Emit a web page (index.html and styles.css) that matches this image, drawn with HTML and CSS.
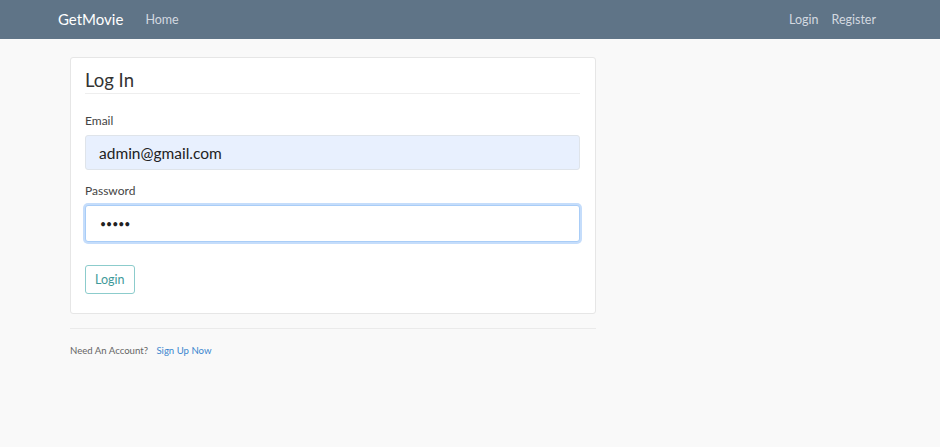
FILE: index.html
```html
<!DOCTYPE html>
<html lang="en">
<head>
<meta charset="utf-8">
<title>GetMovie - Log In</title>
<link rel="stylesheet" href="styles.css">
</head>
<body>
<nav class="navbar">
  <div class="nav-left">
    <a class="brand" href="#">GetMovie</a>
    <a class="nav-link" href="#">Home</a>
  </div>
  <div class="nav-right">
    <a class="nav-link" href="#">Login</a>
    <a class="nav-link" href="#">Register</a>
  </div>
</nav>
<main class="container">
  <section class="card">
    <h2 class="card-title">Log In</h2>
    <div class="field">
      <label class="label">Email</label>
      <div class="input autofill">admin@gmail.com</div>
    </div>
    <div class="field">
      <label class="label">Password</label>
      <div class="input focus">&bull;&bull;&bull;&bull;&bull;</div>
    </div>
    <button class="btn">Login</button>
  </section>
  <div class="footer">
    <span class="muted">Need An Account?</span>
    <a class="link" href="#">Sign Up Now</a>
  </div>
</main>
</body>
</html>
```
FILE: styles.css
```css
* { box-sizing: border-box; }
html, body { margin: 0; padding: 0; }
body {
  background: #f9f9f9;
  font-family: "Lato", "Noto Sans", "Liberation Sans", sans-serif;
  color: #444;
  height: 447px;
  overflow: hidden;
}
a { text-decoration: none; }
.navbar {
  height: 39px;
  background: #5f7487;
  display: flex;
  justify-content: space-between;
  align-items: center;
  padding: 0 64px 1px 58px;
}
.nav-left, .nav-right { display: flex; align-items: center; }
.brand {
  color: #ffffff;
  font-size: 15px;
  margin-right: 22px;
}
.nav-link {
  color: #d3d9e0;
  font-size: 12.5px;
}
.nav-right .nav-link { margin-left: 13px; }
.container {
  width: 526px;
  margin-left: 70px;
  padding-top: 18px;
}
.card {
  background: #fff;
  border: 1px solid #e6e6e6;
  border-radius: 3px;
  padding: 10px 15px 19px 14px;
}
.card-title {
  margin: 0;
  font-weight: 400;
  font-size: 18.5px;
  color: #333;
  line-height: 24px;
  padding-bottom: 1px;
  border-bottom: 1px solid #eeeeee;
}
.field { display: flex; flex-direction: column; }
.field:first-of-type { margin-top: 19px; }
.label {
  font-size: 12px;
  color: #444;
  line-height: 16px;
  margin-bottom: 6px;
}
.input {
  height: 35px;
  border-radius: 3px;
  border: 1px solid #dfe4ea;
  font-size: 15.5px;
  color: #222;
  padding: 0 13px;
  display: flex;
  align-items: center;
  margin-bottom: 13px;
}
.input.autofill { background: #e8f0fe; }
.input.focus {
  height: 37px;
  background: #fff;
  border: 1px solid #a9cdf7;
  box-shadow: 0 0 0 2px #c5ddfb;
  font-size: 10.5px;
  letter-spacing: 0;
  padding-left: 14px;
  margin-bottom: 0;
}
.btn {
  margin-top: 23px;
  height: 29px;
  padding: 0 9px;
  background: #fff;
  border: 1px solid #8ccccc;
  border-radius: 3px;
  color: #3f9a9a;
  font-family: inherit;
  font-size: 12.5px;
}
.footer {
  margin-top: 14px;
  border-top: 1px solid #eaeaea;
  padding-top: 16px;
  font-size: 9.6px;
}
.muted { color: #666; margin-right: 6px; }
.link { color: #3a86cf; }
```
